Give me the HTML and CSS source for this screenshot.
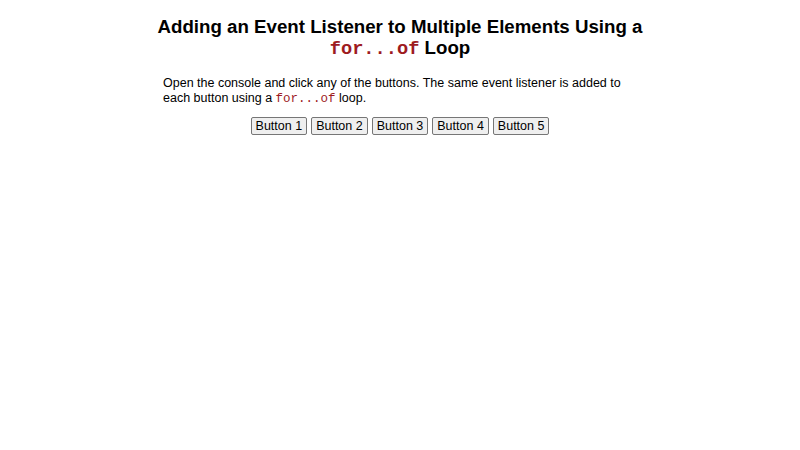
FILE: index.html
```html
<!DOCTYPE html>
<html lang="en">
<head>
  <meta charset="UTF-8">
  <title>for...of event listeners</title>
  <link rel="stylesheet" href="styles.css">
</head>
<body>

<h1>Adding an Event Listener to Multiple Elements Using a <code>for...of</code> Loop</h1>

<div class="wrapper">
  <p>Open the console and click any of the buttons. The same event listener is added to each button using a <code>for...of</code> loop.</p>

  <div class="buttons">
    <button class="btn">Button 1</button>
    <button class="btn">Button 2</button>
    <button class="btn">Button 3</button>
    <button class="btn">Button 4</button>
    <button class="btn">Button 5</button>
  </div>
</div>

<script>
const buttons = document.querySelectorAll('.btn');

for (const button of buttons) {
  button.addEventListener('click', (e) => {
    console.log(e.target.textContent + ' clicked');
  });
}
</script>

</body>
</html>
```

FILE: styles.css
```css
body {
  font-family: "Liberation Sans", Arial, sans-serif;
  color: #000;
  background: #fff;
  margin: 0;
}
h1 {
  max-width: 520px;
  margin: 16px auto 15px;
  text-align: center;
  font-size: 18.7px;
  line-height: 21.4px;
}
code {
  font-family: "Liberation Mono", monospace;
  font-size: 1em;
  color: #9e1b1f;
}
.wrapper {
  max-width: 474px;
  margin: 0 auto;
}
p {
  font-size: 12.5px;
  line-height: 15px;
  margin: 0 0 10px;
}
.buttons {
  display: flex;
  justify-content: center;
  gap: 4px;
}
.btn {
  font-family: "Liberation Sans", Arial, sans-serif;
  font-size: 12.5px;
  padding: 1px 4px;
  border: 1px solid #767676;
  border-radius: 2px;
  background: #efefef;
  color: #000;
}
```
